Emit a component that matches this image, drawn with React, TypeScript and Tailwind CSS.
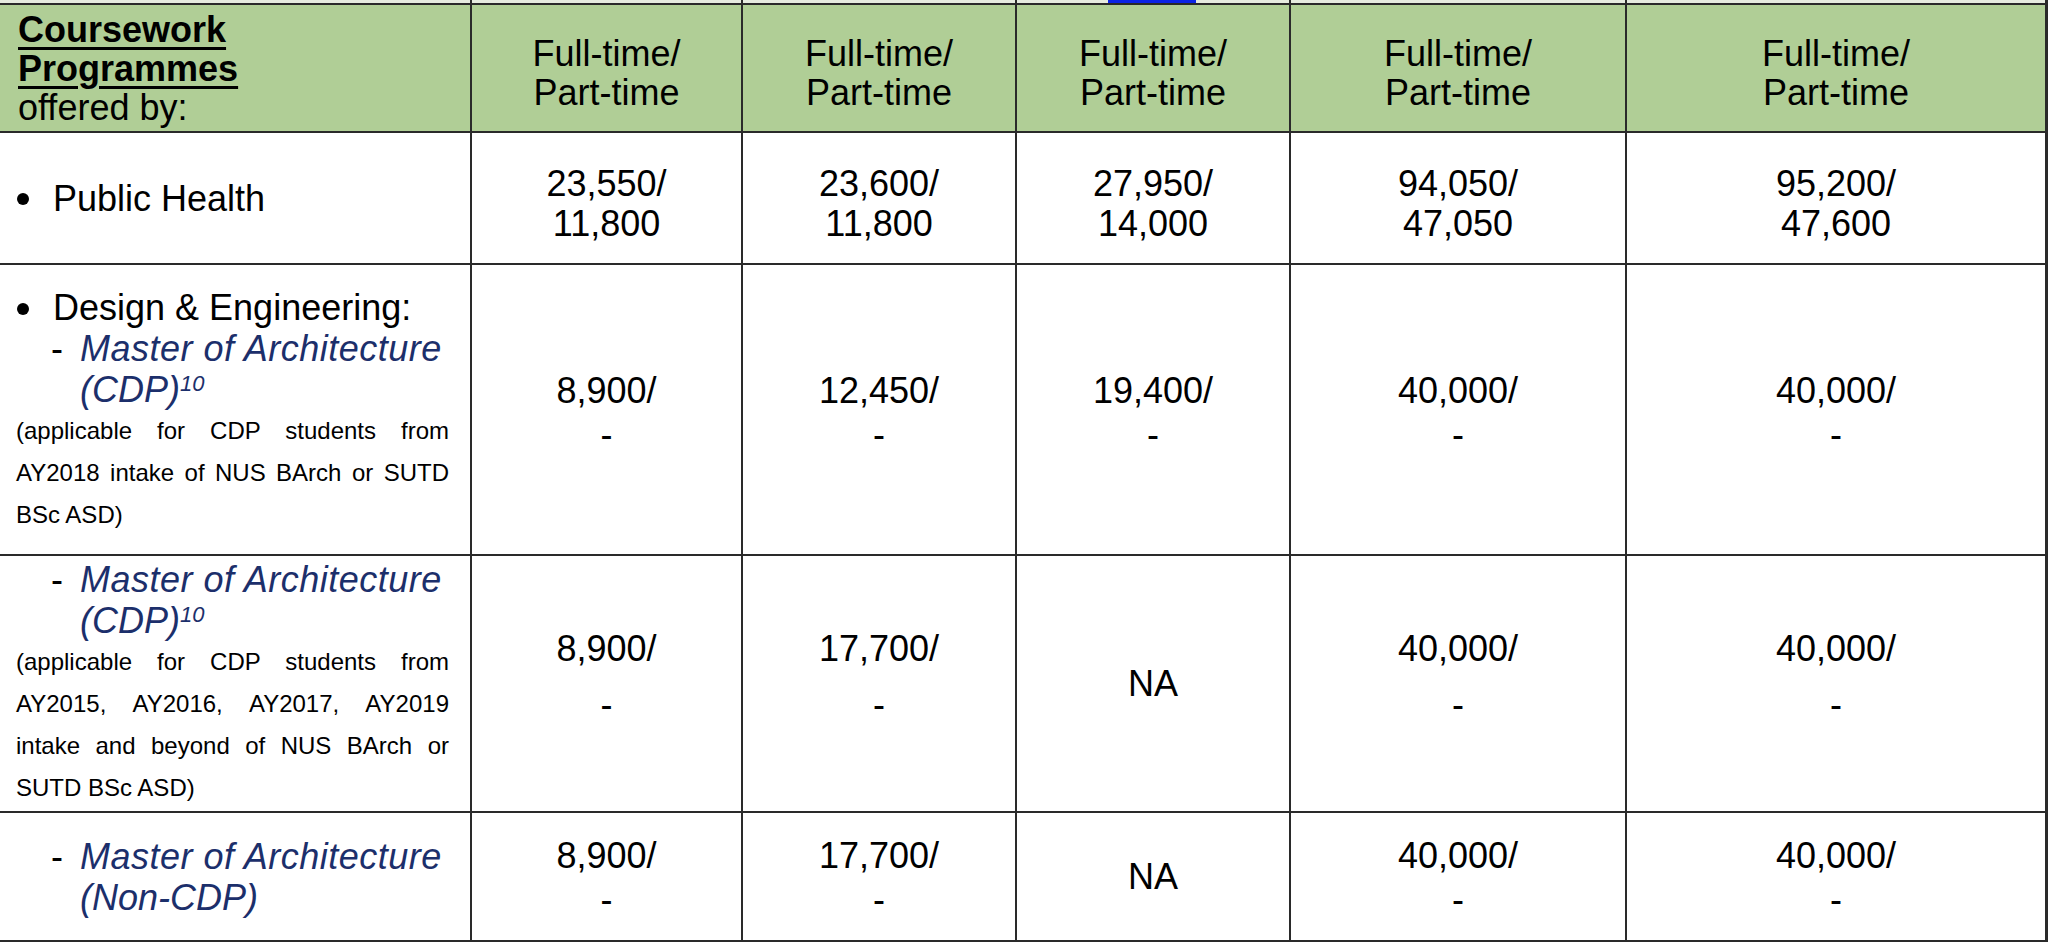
import React from "react";

const Num = ({ a, b, cls }: { a: string; b?: string; cls: string }) => (
  <div className={`flex flex-col items-center justify-center bg-white text-center text-[36px] text-black ${cls}`}>
    <span>{a}</span>
    {b !== undefined && <span>{b}</span>}
  </div>
);

const Head = () => (
  <div className="flex flex-col items-center justify-center bg-[#b0ce96] pt-[10px] text-center text-[36px] leading-[39px] text-black">
    <span>Full-time/</span>
    <span>Part-time</span>
  </div>
);

const Blue = ({ children, wide }: { children: React.ReactNode; wide?: boolean }) => (
  <span className={wide ? "italic tracking-[0.5px] text-[#1c2f6b]" : "italic text-[#1c2f6b]"}>{children}</span>
);

const Dot = () => (
  <span className="flex h-[41px] w-[37px] shrink-0 items-center">
    <span className="mt-[2px] ml-[1px] h-[12px] w-[12px] rounded-full bg-black" />
  </span>
);

function MasterLines({ last, sup }: { last: string; sup?: boolean }) {
  return (
    <div className="text-[36px] leading-[41px]">
      <div className="flex">
        <span className="w-[64px] shrink-0 pl-[35px]">-</span>
        <Blue wide>Master of Architecture</Blue>
      </div>
      <div className="pl-[64px]">
        <Blue>
          {last}
          {sup && <sup className="text-[22px]">10</sup>}
        </Blue>
      </div>
    </div>
  );
}

const Small = ({ children }: { children: React.ReactNode }) => (
  <p className="text-justify text-[24px] leading-[42px] text-black">{children}</p>
);

export default function App() {
  const r1 = "leading-[40px] pt-[12px]";
  const r2 = "leading-[44px] pt-[6px]";
  const r3 = "leading-[56px] pb-[14px]";
  const r4 = "leading-[44px] pt-[2px]";
  return (
    <div className="min-h-[946px] w-[2048px] bg-white font-['Liberation_Sans',Arial,sans-serif] text-black">
      <div className="grid grid-cols-[470px_269px_272px_272px_334px_418px] grid-rows-[3px_126px_130px_289px_255px_127px] gap-[2px] bg-[#2a2a2a] pr-[3px] pb-[2px]">
        {/* top strip */}
        <div className="bg-[#e6ebdf]" />
        <div className="bg-[#e6ebdf]" />
        <div className="bg-[#e6ebdf]" />
        <div className="flex bg-[#e6ebdf]">
          <div className="ml-[91px] h-[3px] w-[88px] bg-[#0b24e6]" />
        </div>
        <div className="bg-[#e6ebdf]" />
        <div className="bg-[#e6ebdf]" />

        {/* header */}
        <div className="flex flex-col justify-center bg-[#b0ce96] pl-[18px] text-[36px] leading-[39px]">
          <span className="font-bold underline decoration-[3px] underline-offset-[5px]">Coursework</span>
          <span className="font-bold underline decoration-[3px] underline-offset-[5px]">Programmes</span>
          <span>offered by:</span>
        </div>
        <Head />
        <Head />
        <Head />
        <Head />
        <Head />

        {/* row 1 */}
        <div className="flex items-center bg-white pl-[16px] text-[36px] leading-[41px]">
          <Dot />
          <span>Public Health</span>
        </div>
        <Num cls={r1} a="23,550/" b="11,800" />
        <Num cls={r1} a="23,600/" b="11,800" />
        <Num cls={r1} a="27,950/" b="14,000" />
        <Num cls={r1} a="94,050/" b="47,050" />
        <Num cls={r1} a="95,200/" b="47,600" />

        {/* row 2 */}
        <div className="flex flex-col justify-center bg-white pl-[16px] pr-[21px] pt-[4px]">
          <div className="flex text-[36px] leading-[41px]">
            <Dot />
            <span>Design &amp; Engineering:</span>
          </div>
          <MasterLines last="(CDP)" sup />
          <Small>(applicable for CDP students from AY2018 intake of NUS BArch or SUTD BSc ASD)</Small>
        </div>
        <Num cls={r2} a="8,900/" b="-" />
        <Num cls={r2} a="12,450/" b="-" />
        <Num cls={r2} a="19,400/" b="-" />
        <Num cls={r2} a="40,000/" b="-" />
        <Num cls={r2} a="40,000/" b="-" />

        {/* row 3 */}
        <div className="flex flex-col justify-center bg-white pl-[16px] pr-[21px]">
          <MasterLines last="(CDP)" sup />
          <Small>
            (applicable for CDP students from AY2015, AY2016, AY2017, AY2019 intake and beyond of NUS BArch or SUTD
            BSc ASD)
          </Small>
        </div>
        <Num cls={r3} a="8,900/" b="-" />
        <Num cls={r3} a="17,700/" b="-" />
        <Num cls="leading-[41px]" a="NA" />
        <Num cls={r3} a="40,000/" b="-" />
        <Num cls={r3} a="40,000/" b="-" />

        {/* row 4 */}
        <div className="flex flex-col justify-center bg-white pl-[16px] pr-[21px]">
          <MasterLines last="(Non-CDP)" />
        </div>
        <Num cls={r4} a="8,900/" b="-" />
        <Num cls={r4} a="17,700/" b="-" />
        <Num cls="leading-[41px]" a="NA" />
        <Num cls={r4} a="40,000/" b="-" />
        <Num cls={r4} a="40,000/" b="-" />
      </div>
    </div>
  );
}
